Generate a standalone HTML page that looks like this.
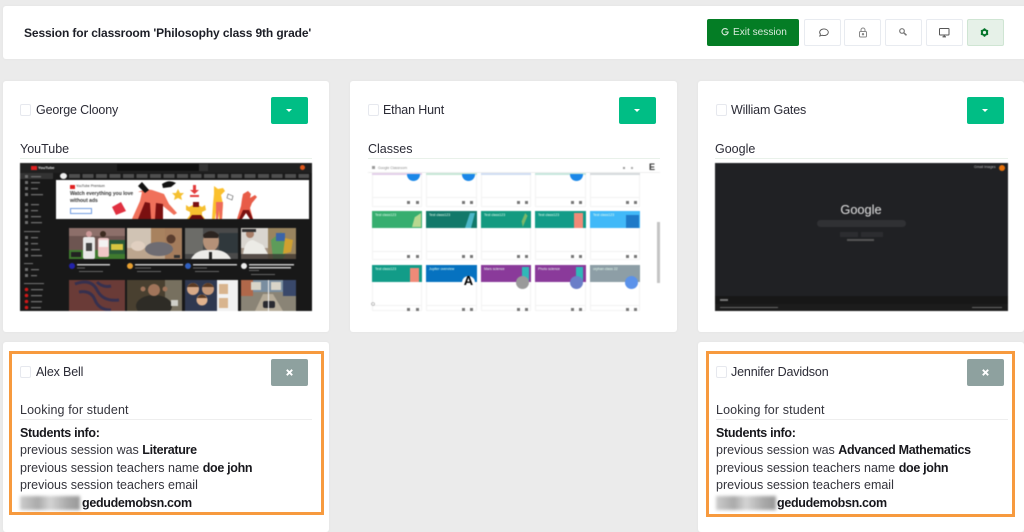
<!DOCTYPE html>
<html><head><meta charset="utf-8"><style>
*{box-sizing:border-box}
html,body{margin:0;padding:0}
body{width:1024px;height:525px;overflow:hidden;background:#ebebeb;position:relative;font-family:"Liberation Sans",sans-serif;color:#212529;filter:blur(.3px)}
.a{position:absolute}
.card{position:absolute;background:#fff;border-radius:3px;box-shadow:0 0 3px rgba(0,0,0,.04)}
.t{position:absolute;white-space:nowrap;line-height:18px}
.btn{position:absolute;top:19px;height:27px;width:37px;background:#fff;border:1px solid #e8ebf0;border-radius:2px}
.btn svg{position:absolute;left:11px;top:5px}
.cb{position:absolute;width:11px;height:12px;background:#fff;border:1px solid #e6e8ee;border-radius:2px}
.name{font-size:12.5px;letter-spacing:-.15px;color:#2b2b36}
.head{font-size:12.5px;color:#2b2b36}
.dd{position:absolute;width:37px;height:27px;background:#00be85;border-radius:2px}
.dd:after{content:"";position:absolute;left:15px;top:12px;border-left:3.5px solid transparent;border-right:3.5px solid transparent;border-top:3.5px solid #fff}
.x{position:absolute;width:37px;height:27px;background:#8ea19f;border-radius:2px}
.x svg{position:absolute;left:15px;top:10px}
.hr{position:absolute;height:1px;background:#e9f1ea}
.shot{position:absolute;overflow:hidden;filter:blur(.6px)}
.shot div,.shot span,.shot svg{position:absolute}
.body{font-size:12.5px;color:#34343c}
.body b{color:#17171c;letter-spacing:-.32px}
.org{position:absolute;border:3px solid #f79a3e}
.blurmail{position:absolute;height:14px;background:linear-gradient(90deg,#ccc,#aaa 30%,#d4d4d4 50%,#a8a8a8 80%,#999);filter:blur(1.6px)}
.cc{border:1px solid #f3f3f3}
.ct{font:3.5px/5px "Liberation Sans",sans-serif;color:#e8fff0}
</style></head><body>

<div class="card" style="left:3px;top:6px;width:1030px;height:53px"></div>
<div class="t" style="left:24px;top:24px;font-size:12px;font-weight:bold;color:#1d1f27;letter-spacing:-.12px">Session for classroom 'Philosophy class 9th grade'</div>

<div class="a" style="left:707px;top:19px;width:92px;height:27px;background:#047d25;border-radius:2px"></div>
<svg class="a" style="left:721px;top:28px" width="8" height="8" viewBox="0 0 10 10" fill="none" stroke="#d8eadb" stroke-width="1.4"><path d="M8.2 2.2A3.9 3.9 0 1 0 9 5H5.2"/></svg>
<div class="t" style="left:733px;top:24px;font-size:10.1px;color:#d8eadb">Exit session</div>

<div class="btn" style="left:804px"><svg width="14" height="16" viewBox="0 0 14 16" fill="none" stroke="#555" stroke-width=".9"><path d="M3.800 11l.6-1.900A4.300 3.300 0 1 1 6 10.200z"/></svg></div>
<div class="btn" style="left:844px"><svg width="14" height="16" viewBox="0 0 14 16" fill="none" stroke="#888" stroke-width="1"><rect x="3.500" y="6.500" width="7" height="5.500" rx="1"/><path d="M5 6.500V5a2 2 0 0 1 4 0v1.500"/><circle cx="7" cy="9.200" r=".7" fill="#777"/></svg></div>
<div class="btn" style="left:885px"><svg width="14" height="16" viewBox="0 0 14 16" fill="none" stroke="#777" stroke-width="1.200"><circle cx="5" cy="6" r="2.300"/><path d="M6.800 7.800l2.700 2.500" stroke-width="1.500"/></svg></div>
<div class="btn" style="left:926px"><svg width="14" height="16" viewBox="0 0 14 16" fill="none" stroke="#555" stroke-width="1"><rect x="1.500" y="3.500" width="9.500" height="6.500" rx=".6"/><path d="M6.200 10v1.500M4.500 11.800h3.500" stroke-width="1.200"/></svg></div>
<div class="btn" style="left:967px;background:#e6f1e8;border-color:#cfe5d3"><svg width="14" height="16" viewBox="0 0 14 16" fill="none" stroke="#04752a" stroke-width="2"><circle cx="5.500" cy="7.500" r="2.600"/><path d="M5.500 3.300v1M5.500 10.700v1M1.900 5.400l.9.500M8.200 9.100l.9.500M1.900 9.600l.9-.5M8.200 5.900l.9-.5" stroke-width="1.600"/></svg></div>

<!-- Card 1 -->
<div class="card" style="left:3px;top:81px;width:326px;height:251px"></div>
<div class="cb" style="left:20px;top:104px"></div>
<div class="t name" style="left:36px;top:101px">George Cloony</div>
<div class="dd" style="left:271px;top:97px"></div>
<div class="t head" style="left:20px;top:140px">YouTube</div>
<div class="hr" style="left:20px;top:158px;width:292px"></div>
<div class="shot" style="left:20px;top:163px;width:292px;height:148px;background:#181818">
  <div style="left:0;top:0;width:292px;height:10px;background:#202020"></div>
  <div style="left:11px;top:3px;width:6px;height:4px;background:#e02020"></div>
  <span style="left:18px;top:2px;font:bold 4px/6px 'Liberation Sans';color:#eee">YouTube</span>
  <div style="left:97px;top:1px;width:82px;height:7px;background:#111"></div>
  <div style="left:179px;top:1px;width:9px;height:7px;background:#333"></div>
  <div style="left:280px;top:2px;width:5px;height:5px;border-radius:50%;background:#e0561a"></div>
  <div style="left:0;top:10px;width:33px;height:6px;background:#333"></div>
  <div style="left:40px;top:10px;width:7px;height:6px;border-radius:50%;background:#eee"></div>
  <div style="left:49px;top:11px;width:240px;height:4px;background:repeating-linear-gradient(90deg,#4f4f4f 0 11px,#1c1c1c 11px 13.500px)"></div>
  <svg style="left:0;top:0" width="36" height="148" viewBox="0 0 36 148" fill="#6e6e6e">
    <g><rect x="5" y="12" width="3" height="3"/><rect x="11" y="13" width="10" height="1.300"/>
    <rect x="5" y="18" width="3" height="3"/><rect x="11" y="19" width="9" height="1.300"/>
    <rect x="5" y="24" width="3" height="3"/><rect x="11" y="25" width="7" height="1.300"/>
    <rect x="5" y="30" width="3" height="3"/><rect x="11" y="31" width="12" height="1.300"/>
    <rect x="5" y="40" width="3" height="3"/><rect x="11" y="41" width="8" height="1.300"/>
    <rect x="5" y="46" width="3" height="3"/><rect x="11" y="47" width="7" height="1.300"/>
    <rect x="5" y="52" width="3" height="3"/><rect x="11" y="53" width="10" height="1.300"/>
    <rect x="5" y="58" width="3" height="3"/><rect x="11" y="59" width="11" height="1.300"/>
    <rect x="4" y="68" width="16" height="1.100"/>
    <rect x="5" y="73" width="3" height="3"/><rect x="11" y="74" width="7" height="1.300"/>
    <rect x="5" y="79" width="3" height="3"/><rect x="11" y="80" width="7" height="1.300"/>
    <rect x="5" y="85" width="3" height="3"/><rect x="11" y="86" width="9" height="1.300"/>
    <rect x="5" y="91" width="3" height="3"/><rect x="11" y="92" width="11" height="1.300"/>
    <rect x="4" y="100" width="9" height="1.100"/>
    <rect x="5" y="105" width="3" height="3"/><rect x="11" y="106" width="8" height="1.300"/>
    <rect x="5" y="111" width="3" height="3"/><rect x="11" y="112" width="6" height="1.300"/>
    <rect x="4" y="120" width="20" height="1.100"/>
    <rect x="11" y="126" width="12" height="1.300"/><rect x="11" y="132" width="11" height="1.300"/><rect x="11" y="138" width="11" height="1.300"/><rect x="11" y="144" width="10" height="1.300"/></g>
    <circle cx="6.500" cy="126.500" r="1.800" fill="#d01818"/><circle cx="6.500" cy="132.500" r="1.800" fill="#d01818"/><circle cx="6.500" cy="138.500" r="1.800" fill="#d01818"/><circle cx="6.500" cy="144.500" r="1.800" fill="#d01818"/>
  </svg>
  <div style="left:36px;top:17px;width:253px;height:39px;background:#fff"></div>
  <div style="left:50px;top:22px;width:5px;height:4px;background:#e02020"></div>
  <span style="left:56px;top:21px;font:3.500px/5px 'Liberation Sans';color:#333">YouTube Premium</span>
  <span style="left:50px;top:28px;font:bold 5px/7.300px 'Liberation Sans';color:#333;white-space:nowrap">Watch everything you love<br>without ads</span>
  <div style="left:50px;top:45px;width:22px;height:6px;border:1px solid #6f9be0"></div>
  <svg style="left:36px;top:17px" width="253" height="39" viewBox="0 0 253 39">
    <path d="M82 12l8-3 6 1 12 4 5 10 8 9-3 2-11-9-4-2-1 15h-8l-3-12-9 12h-6l8-18 2-9z" fill="#f0705a"/>
    <path d="M82 39l7-17 5 1 1 16zM99 39l1-16 7 1 0 15z" fill="#7a1010"/>
    <path d="M82 6l4-4 7 8-4 3zM106 4q7-5 14-1l-5 4-8 1z" fill="#111"/>
    <path d="M56 27l9-5 5 9-10 4z" fill="#e03040"/>
    <path d="M122 9l2 4 4 0-3 3 1 4-4-2-4 2 1-4-3-3 4 0z" fill="#f5c030"/>
    <path d="M137 5h3v5h3l-4.500 4-4.500-4h3zM134 15h9v2h-9z" fill="#e23b3b"/>
    <path d="M130 25l3 2 4-2h5l4 2 3-2 1 5-4 2v3l3 4h-18l3-4v-3l-4-2z" fill="#f6bf2f"/>
    <path d="M133 39l3-4h9l3 4z" fill="#6d0d0d"/>
    <path d="M137 22h6v5h-6z" fill="#7a1010"/>
    <path d="M158 6l4 3 5-1 2 3-4 4 2 9-1 15h-3l-2-13-2 13h-3l1-15 1-10z" fill="#fbc02d"/>
    <path d="M160 22h7l-1 17h-2l-1-9-1 9h-2z" fill="#ee6a5a"/>
    <path d="M187 14l5-3 3 3-1 4 5-3 2 2-5 6-2 5 3 11h-3l-5-9-5 9h-3l4-13 1-7z" fill="#e85c48"/>
    <path d="M183 39l4-9h6l4 9h-3l-4-6-4 6z" fill="#7a1010"/>
    <path d="M172 14l5 2-1 4-5-2z" fill="none" stroke="#555" stroke-width=".6"/>
  </svg>
  <svg style="left:49px;top:65px" width="227" height="83" viewBox="0 0 227 83">
    <rect width="56" height="31" fill="#6d5551"/><rect y="0" width="56" height="8" fill="#8d6f6a"/><rect y="22" width="56" height="9" fill="#3f7a2f"/><rect x="38" y="12" width="18" height="14" fill="#2a5a38"/>
    <rect x="14" y="9" width="12" height="22" rx="2" fill="#e8e8e8"/><rect x="17" y="15" width="6" height="8" fill="#444"/><circle cx="20" cy="6" r="3" fill="#c99"/>
    <rect x="29" y="10" width="11" height="19" rx="2" fill="#efc6c6"/><circle cx="34" cy="6" r="3" fill="#3c2a20"/><rect x="30" y="12" width="9" height="7" fill="#f2f2f2"/>
    <rect x="2" y="24" width="10" height="5" fill="#222"/><rect x="42" y="16" width="12" height="6" fill="#d8c540"/>
    <g transform="translate(58 0)"><rect width="55" height="31" fill="#a8825f"/><rect x="0" width="24" height="22" fill="#d0c3b4"/><rect x="0" y="20" width="55" height="11" fill="#bba58e"/><rect x="38" width="17" height="31" fill="#a47c5c"/><ellipse cx="32" cy="21" rx="14" ry="7" fill="#6e6c72"/><circle cx="44" cy="11" r="4.500" fill="#5a3d2e"/><ellipse cx="11" cy="18" rx="7" ry="5" fill="#e0cfc0"/><rect x="47" y="27" width="6" height="3" fill="#333"/></g>
    <g transform="translate(116 0)"><rect width="53" height="31" fill="#4a4a4a"/><rect x="34" y="5" width="19" height="20" fill="#30383c"/><rect width="18" height="26" fill="#6c6c68"/><ellipse cx="26" cy="13" rx="8" ry="10" fill="#b59178"/><path d="M18 7q8-8 16 0l-1 3h-14z" fill="#2c2420"/><path d="M6 31q4-8 14-9h12q10 1 14 9z" fill="#ecebe8"/><rect x="24" y="24" width="3" height="7" fill="#222"/></g>
    <g transform="translate(172 0)"><rect width="55" height="31" fill="#a39386"/><rect x="0" y="0" width="28" height="20" fill="#d9d5cf"/><circle cx="9" cy="6" r="4" fill="#a87e68"/><path d="M1 4h14v-3h-14z" fill="#333"/><path d="M2 26q2-14 10-14l10 5 5 9z" fill="#ecebe6"/><rect x="27" width="28" height="31" fill="#99845f"/><path d="M30 12l10-8 8 14-6 13h-10z" fill="#5d9c5a"/><path d="M35 5h9v8h-9z" fill="#3b64a8"/><path d="M44 10l8 2-2 12-8 2z" fill="#d0a030"/><rect y="26" width="55" height="5" fill="#332e2c" opacity=".7"/></g>
    <g transform="translate(0 52)"><rect width="56" height="31" fill="#6a3b37"/><path d="M6 4q16-6 22 6t22 10M10 12q12-2 16 8t16 10M28 2q6 6 14 4" fill="none" stroke="#36304e" stroke-width="3"/></g>
    <g transform="translate(58 52)"><rect width="55" height="31" fill="#494030"/><rect x="38" width="17" height="31" fill="#77705f"/><ellipse cx="27" cy="26" rx="18" ry="11" fill="#2e2c26"/><circle cx="27" cy="10" r="6" fill="#a0745a"/><circle cx="16" cy="9" r="2.500" fill="#a0745a"/><circle cx="38" cy="9" r="2.500" fill="#a0745a"/><rect x="44" y="20" width="7" height="6" fill="#cfcfc8"/></g>
    <g transform="translate(116 52)"><rect width="33" height="31" fill="#2f3850"/><circle cx="8" cy="9" r="6" fill="#d8aa88"/><circle cx="23" cy="9" r="6" fill="#c89a7a"/><circle cx="17" cy="20" r="5.500" fill="#e0b28e"/><path d="M2 7q6-8 12 0M17 7q6-8 12 0M12 18q5-7 10 0" fill="#5a3a24"/><rect x="32" width="21" height="31" fill="#f2f2f2"/><rect x="34" y="4" width="9" height="10" fill="#d8b48e"/><rect x="34" y="18" width="9" height="10" fill="#d8b48e"/></g>
    <g transform="translate(172 52)"><rect width="55" height="31" fill="#8a8476"/><rect width="55" height="12" fill="#7a8ea0"/><rect x="0" width="12" height="16" fill="#b0684a"/><rect x="42" width="13" height="16" fill="#39486a"/><rect x="10" y="2" width="10" height="8" fill="#d8d4c8"/><rect x="30" y="2" width="10" height="8" fill="#d8d4c8"/><path d="M14 31l8-17h10l10 17z" fill="#b5ab98"/><rect x="22" y="21" width="12" height="7" rx="2" fill="#2a2a30"/><rect x="27" y="0" width="1" height="31" fill="#eee"/></g>
    <circle cx="3" cy="38" r="3" fill="#2222aa"/><circle cx="61" cy="38" r="3" fill="#e8a030"/><circle cx="119" cy="38" r="3" fill="#3060c0"/><circle cx="175" cy="38" r="3" fill="#eee"/>
    <g fill="#c8c8c8"><rect x="8" y="36" width="33" height="1.500"/><rect x="66" y="36" width="48" height="1.500"/><rect x="124" y="36" width="44" height="1.500"/><rect x="180" y="36" width="45" height="1.500"/><rect x="180" y="39" width="42" height="1.500"/></g>
    <g fill="#666"><rect x="8" y="39.500" width="8" height="1"/><rect x="66" y="39.500" width="16" height="1"/><rect x="124" y="39.500" width="14" height="1"/><rect x="180" y="42" width="10" height="1"/><rect x="10" y="43" width="24" height="1"/><rect x="68" y="43" width="24" height="1"/><rect x="126" y="43" width="24" height="1"/><rect x="182" y="46" width="24" height="1"/></g>
  </svg>
</div>

<!-- Card 2 -->
<div class="card" style="left:350px;top:81px;width:327px;height:251px"></div>
<div class="cb" style="left:368px;top:104px"></div>
<div class="t name" style="left:383px;top:101px">Ethan Hunt</div>
<div class="dd" style="left:619px;top:97px"></div>
<div class="t head" style="left:368px;top:140px">Classes</div>
<div class="hr" style="left:368px;top:158px;width:292px"></div>
<div class="shot" style="left:368px;top:163px;width:292px;height:148px;background:#fff">
  <div class="cc" style="left:4px;top:9px;width:50px;height:35px"></div>
  <div class="cc" style="left:58px;top:9px;width:51px;height:35px"></div>
  <div class="cc" style="left:113px;top:9px;width:50px;height:35px"></div>
  <div class="cc" style="left:167px;top:9px;width:51px;height:35px"></div>
  <div class="cc" style="left:222px;top:9px;width:50px;height:35px"></div>
  <div style="left:4px;top:10px;width:50px;height:2px;background:#e3cfea"></div>
  <div style="left:58px;top:10px;width:51px;height:2px;background:#c6e6d6"></div>
  <div style="left:113px;top:10px;width:50px;height:2px;background:#cfdcf2"></div>
  <div style="left:167px;top:10px;width:51px;height:2px;background:#c6e6dc"></div>
  <div style="left:222px;top:10px;width:50px;height:2px;background:#d6dadc"></div>
  <div style="left:39px;top:5px;width:13px;height:13px;border-radius:50%;background:#1a87e8;clip-path:inset(6px 0 0 0)"></div>
  <div style="left:94px;top:5px;width:13px;height:13px;border-radius:50%;background:#1a87e8;clip-path:inset(6px 0 0 0)"></div>
  <div style="left:202px;top:5px;width:13px;height:13px;border-radius:50%;background:#1a87e8;clip-path:inset(6px 0 0 0)"></div>
  <div style="left:0;top:0;width:292px;height:10px;background:#fff;border-bottom:1px solid #eee"></div>
  <div style="left:4px;top:3px;width:3px;height:3px;background:#999"></div>
  <span style="left:10px;top:2px;font:3.500px/6px 'Liberation Sans';color:#888">Google Classroom</span>
  <div style="left:255px;top:4px;width:2px;height:2px;background:#999"></div>
  <div style="left:263px;top:4px;width:2px;height:2px;background:#aaa"></div>
  <span style="left:281px;top:-1px;font:bold 9px/11px 'Liberation Sans';color:#333">E</span>
  <div style="left:289px;top:59px;width:3px;height:61px;background:#c4c4c4"></div>
  <div class="cc" style="left:4px;top:48px;width:50px;height:49px"></div>
  <div class="cc" style="left:58px;top:48px;width:51px;height:49px"></div>
  <div class="cc" style="left:113px;top:48px;width:50px;height:49px"></div>
  <div class="cc" style="left:167px;top:48px;width:51px;height:49px"></div>
  <div class="cc" style="left:222px;top:48px;width:50px;height:49px"></div>
  <div style="left:4px;top:48px;width:50px;height:17px;background:#36ae6f"></div>
  <div style="left:58px;top:48px;width:51px;height:17px;background:#12796a"></div>
  <div style="left:113px;top:48px;width:50px;height:17px;background:#139a80"></div>
  <div style="left:167px;top:48px;width:51px;height:17px;background:#129c88"></div>
  <div style="left:222px;top:48px;width:50px;height:17px;background:#41b9f8"></div>
  <div style="left:44px;top:50px;width:9px;height:14px;background:#b8d890;clip-path:polygon(30% 30%,100% 0,100% 100%,0 100%)"></div>
  <div style="left:97px;top:50px;width:10px;height:15px;background:#4cb7c8;clip-path:polygon(50% 0,100% 0,60% 100%,0 100%)"></div>
  <div style="left:150px;top:50px;width:12px;height:14px;background:#7ab86a;clip-path:polygon(60% 0,80% 20%,40% 100%,30% 60%)"></div>
  <div style="left:206px;top:50px;width:9px;height:15px;background:#f08a78"></div>
  <div style="left:258px;top:52px;width:13px;height:13px;background:#1e7ac8"></div>
  <span class="ct" style="left:7px;top:50px">Test class123</span>
  <span class="ct" style="left:61px;top:50px">Test class123</span>
  <span class="ct" style="left:116px;top:50px">Test class123</span>
  <span class="ct" style="left:170px;top:50px">Test class123</span>
  <span class="ct" style="left:225px;top:50px">Test class123</span>
  <div class="cc" style="left:4px;top:102px;width:50px;height:46px"></div>
  <div class="cc" style="left:58px;top:102px;width:51px;height:46px"></div>
  <div class="cc" style="left:113px;top:102px;width:50px;height:46px"></div>
  <div class="cc" style="left:167px;top:102px;width:51px;height:46px"></div>
  <div class="cc" style="left:222px;top:102px;width:50px;height:46px"></div>
  <div style="left:4px;top:102px;width:50px;height:17px;background:#129c88"></div>
  <div style="left:58px;top:102px;width:51px;height:17px;background:#0672c0"></div>
  <div style="left:113px;top:102px;width:50px;height:17px;background:#8a3a9a"></div>
  <div style="left:167px;top:102px;width:51px;height:17px;background:#8a3a9a"></div>
  <div style="left:222px;top:102px;width:50px;height:17px;background:#8d9ea6"></div>
  <div style="left:42px;top:105px;width:9px;height:14px;background:#f08a78"></div>
  <div style="left:154px;top:104px;width:7px;height:14px;background:#30b8b8"></div>
  <div style="left:208px;top:104px;width:7px;height:14px;background:#30b8b8"></div>
  <span class="ct" style="left:7px;top:104px">Test class123</span>
  <span class="ct" style="left:61px;top:104px">Jupiter overview</span>
  <span class="ct" style="left:116px;top:104px">Mars science</span>
  <span class="ct" style="left:170px;top:104px">Photo science</span>
  <span class="ct" style="left:225px;top:104px">orphan class 22</span>
  <div style="left:94px;top:113px;width:13px;height:13px;border-radius:50%;background:#fff"></div>
  <span style="left:94px;top:110px;width:13px;text-align:center;font:bold 13px/16px 'Liberation Sans';color:#000">A</span>
  <div style="left:148px;top:113px;width:13px;height:13px;border-radius:50%;background:#9a9a9a"></div>
  <div style="left:202px;top:113px;width:13px;height:13px;border-radius:50%;background:#6a7ec8"></div>
  <div style="left:257px;top:113px;width:13px;height:13px;border-radius:50%;background:#5b92ea"></div>
  <svg style="left:0;top:0" width="292" height="148" viewBox="0 0 292 148">
    <g stroke="#f1f1f1"><path d="M4 34.500h50M58 34.500h51M113 34.500h50M167 34.500h51M222 34.500h50M4 88.500h50M58 88.500h51M113 88.500h50M167 88.500h51M222 88.500h50M4 142.500h50M58 142.500h51M113 142.500h50M167 142.500h51M222 142.500h50"/></g>
    <g fill="#777"><rect x="39" y="38" width="3" height="3"/><rect x="48" y="38" width="3" height="3"/><rect x="94" y="38" width="3" height="3"/><rect x="102" y="38" width="3" height="3"/><rect x="149" y="38" width="3" height="3"/><rect x="157" y="38" width="3" height="3"/><rect x="203" y="38" width="3" height="3"/><rect x="211" y="38" width="3" height="3"/><rect x="258" y="38" width="3" height="3"/><rect x="266" y="38" width="3" height="3"/>
    <rect x="39" y="92" width="3" height="3"/><rect x="48" y="92" width="3" height="3"/><rect x="94" y="92" width="3" height="3"/><rect x="102" y="92" width="3" height="3"/><rect x="149" y="92" width="3" height="3"/><rect x="157" y="92" width="3" height="3"/><rect x="203" y="92" width="3" height="3"/><rect x="211" y="92" width="3" height="3"/><rect x="258" y="92" width="3" height="3"/><rect x="266" y="92" width="3" height="3"/>
    <rect x="39" y="145" width="3" height="3"/><rect x="48" y="145" width="3" height="3"/><rect x="94" y="145" width="3" height="3"/><rect x="102" y="145" width="3" height="3"/><rect x="149" y="145" width="3" height="3"/><rect x="157" y="145" width="3" height="3"/><rect x="203" y="145" width="3" height="3"/><rect x="211" y="145" width="3" height="3"/><rect x="258" y="145" width="3" height="3"/><rect x="266" y="145" width="3" height="3"/></g>
    <circle cx="5" cy="141" r="1.500" fill="none" stroke="#999" stroke-width=".6"/>
  </svg>
</div>

<!-- Card 3 -->
<div class="card" style="left:698px;top:81px;width:326px;height:251px"></div>
<div class="cb" style="left:716px;top:104px"></div>
<div class="t name" style="left:731px;top:101px">William Gates</div>
<div class="dd" style="left:967px;top:97px"></div>
<div class="t head" style="left:715px;top:140px">Google</div>
<div class="hr" style="left:715px;top:158px;width:293px"></div>
<div class="shot" style="left:715px;top:163px;width:293px;height:148px;background:#202124">
  <span style="left:259px;top:1px;font:3.500px/6px 'Liberation Sans';color:#bbb">Gmail Images</span>
  <div style="left:284px;top:2px;width:6px;height:6px;border-radius:50%;background:#e8710a"></div>
  <span style="left:100px;top:36px;width:92px;text-align:center;font:12.800px/22px 'Liberation Sans';color:#e4e4e4">Google</span>
  <div style="left:102px;top:57px;width:89px;height:7px;border-radius:4px;background:#303134"></div>
  <div style="left:125px;top:69px;width:18px;height:5px;background:#2c2d30"></div>
  <div style="left:146px;top:69px;width:22px;height:5px;background:#2c2d30"></div>
  <div style="left:132px;top:76px;width:27px;height:1.500px;background:#555"></div>
  <div style="left:0;top:133px;width:293px;height:8px;background:#171717"></div>
  <div style="left:0;top:141px;width:293px;height:7px;background:#1c1c1c"></div>
  <div style="left:5px;top:143.500px;width:58px;height:1.500px;background:#666"></div>
  <div style="left:257px;top:143.500px;width:30px;height:1.500px;background:#666"></div>
  <div style="left:5px;top:136px;width:8px;height:1.500px;background:#777"></div>
</div>

<!-- Card 4 -->
<div class="card" style="left:3px;top:342px;width:326px;height:190px"></div>
<div class="org" style="left:9px;top:351px;width:315px;height:164px"></div>
<div class="cb" style="left:20px;top:366px"></div>
<div class="t name" style="left:36px;top:363px">Alex Bell</div>
<div class="x" style="left:271px;top:359px"><svg width="7" height="7" viewBox="0 0 7 7" stroke="#fff" stroke-width="1.900"><path d="M.8.8l5.400 5.400M6.200.8L.8 6.200"/></svg></div>
<div class="t body" style="left:20px;top:401px;letter-spacing:.12px">Looking for student</div>
<div class="hr" style="left:20px;top:419px;width:292px;background:#eeeeee"></div>
<div class="t body" style="left:20px;top:424px"><b>Students info:</b></div>
<div class="t body" style="left:20px;top:441px">previous session was <b>Literature</b></div>
<div class="t body" style="left:20px;top:459px">previous session teachers name <b>doe john</b></div>
<div class="t body" style="left:20px;top:476px">previous session teachers email</div>
<div class="blurmail" style="left:20px;top:496px;width:60px"></div>
<div class="t body" style="left:82px;top:494px"><b>gedudemobsn.com</b></div>

<!-- Card 5 -->
<div class="card" style="left:698px;top:342px;width:326px;height:190px"></div>
<div class="org" style="left:706px;top:351px;width:309px;height:166px"></div>
<div class="cb" style="left:716px;top:366px"></div>
<div class="t name" style="left:731px;top:363px">Jennifer Davidson</div>
<div class="x" style="left:967px;top:359px"><svg width="7" height="7" viewBox="0 0 7 7" stroke="#fff" stroke-width="1.900"><path d="M.8.8l5.400 5.400M6.200.8L.8 6.200"/></svg></div>
<div class="t body" style="left:716px;top:401px;letter-spacing:.12px">Looking for student</div>
<div class="hr" style="left:716px;top:419px;width:292px;background:#eeeeee"></div>
<div class="t body" style="left:716px;top:424px"><b>Students info:</b></div>
<div class="t body" style="left:716px;top:441px">previous session was <b>Advanced Mathematics</b></div>
<div class="t body" style="left:716px;top:459px">previous session teachers name <b>doe john</b></div>
<div class="t body" style="left:716px;top:476px">previous session teachers email</div>
<div class="blurmail" style="left:716px;top:496px;width:60px"></div>
<div class="t body" style="left:777px;top:494px"><b>gedudemobsn.com</b></div>
</body></html>
